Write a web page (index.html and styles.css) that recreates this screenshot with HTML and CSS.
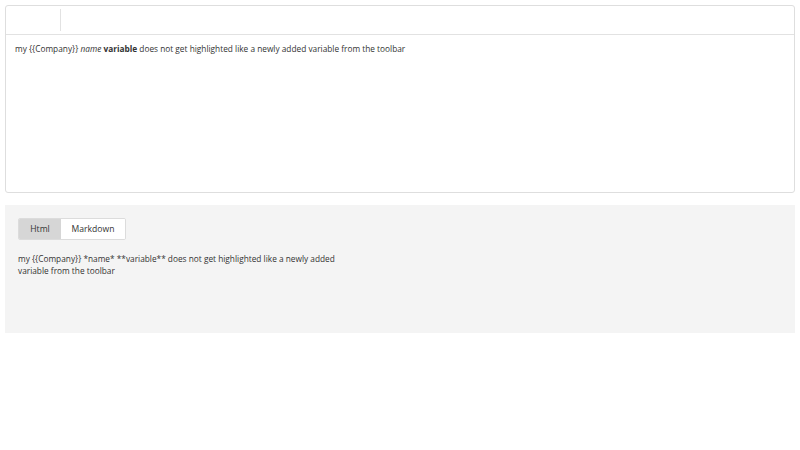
FILE: index.html
```html
<!DOCTYPE html>
<html>
<head>
<meta charset="utf-8">
<link rel="stylesheet" href="styles.css">
</head>
<body>
<div class="page">
  <div class="editor">
    <div class="toolbar">
      <div class="tool-group"></div>
      <div class="tool-sep"></div>
    </div>
    <div class="content">my {{Company}} <em>name</em> <strong>variable</strong> does not get highlighted like a newly added variable from the toolbar</div>
  </div>
  <div class="preview">
    <div class="tabs">
      <button class="tab tab-html active">Html</button>
      <button class="tab tab-md">Markdown</button>
    </div>
    <div class="output">my {{Company}} *name* **variable** does not get highlighted like a newly added variable from the toolbar</div>
  </div>
</div>
</body>
</html>
```
FILE: styles.css
```css
html, body {
  margin: 0;
  padding: 0;
  background: #fff;
}
body {
  font-family: "Open Sans", "Noto Sans", sans-serif;
  font-size: 8.3px;
  color: #333;
}
.page {
  padding: 5px 5px 0 5px;
  display: flex;
  flex-direction: column;
  gap: 12px;
}
.editor {
  height: 188px;
  box-sizing: border-box;
  border: 1px solid #dedede;
  border-radius: 3px;
  display: flex;
  flex-direction: column;
}
.toolbar {
  height: 29px;
  box-sizing: border-box;
  border-bottom: 1px solid #e2e2e2;
  display: flex;
  align-items: center;
}
.tool-group {
  width: 54px;
}
.tool-sep {
  width: 1px;
  height: 22px;
  background: #e2e2e2;
}
.content {
  padding: 8px 9px;
  line-height: 12px;
}
.preview {
  background: #f4f4f4;
  height: 128px;
  box-sizing: border-box;
  padding: 13px 13px;
}
.tabs {
  display: inline-flex;
  border: 1px solid #dcdcdc;
  border-radius: 2px;
  overflow: hidden;
  background: #fff;
}
.tab {
  font-family: inherit;
  font-size: 8.6px;
  color: #333;
  border: none;
  background: #fff;
  height: 20px;
  padding: 0;
  margin: 0;
  text-align: center;
}
.tab-html {
  width: 42px;
}
.tab-md {
  width: 64px;
}
.tab.active {
  background: #d6d6d6;
}
.output {
  margin-top: 13px;
  width: 330px;
  line-height: 12px;
}
```
